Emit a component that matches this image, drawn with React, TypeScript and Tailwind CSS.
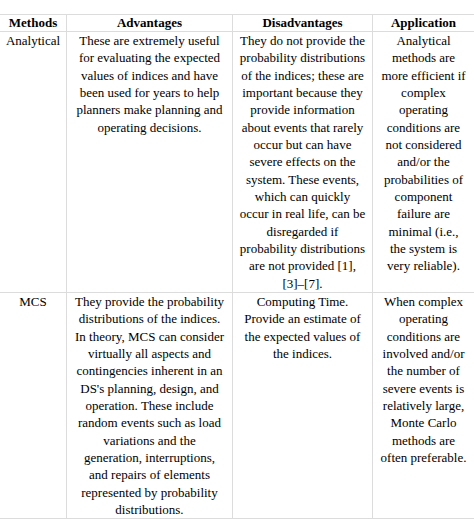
import React from "react";

type Row = { cells: string[][] };

const header = ["Methods", "Advantages", "Disadvantages", "Application"];

const rows: Row[] = [
  {
    cells: [
      ["Analytical"],
      [
        "These are extremely useful",
        "for evaluating the expected",
        "values of indices and have",
        "been used for years to help",
        "planners make planning and",
        "operating decisions.",
      ],
      [
        "They do not provide the",
        "probability distributions",
        "of the indices; these are",
        "important because they",
        "provide information",
        "about events that rarely",
        "occur but can have",
        "severe effects on the",
        "system. These events,",
        "which can quickly",
        "occur in real life, can be",
        "disregarded if",
        "probability distributions",
        "are not provided [1],",
        "[3]\u2013[7].",
      ],
      [
        "Analytical",
        "methods are",
        "more efficient if",
        "complex",
        "operating",
        "conditions are",
        "not considered",
        "and/or the",
        "probabilities of",
        "component",
        "failure are",
        "minimal (i.e.,",
        "the system is",
        "very reliable).",
      ],
    ],
  },
  {
    cells: [
      ["MCS"],
      [
        "They provide the probability",
        "distributions of the indices.",
        "In theory, MCS can consider",
        "virtually all aspects and",
        "contingencies inherent in an",
        "DS's planning, design, and",
        "operation. These include",
        "random events such as load",
        "variations and the",
        "generation, interruptions,",
        "and repairs of elements",
        "represented by probability",
        "distributions.",
      ],
      [
        "Computing Time.",
        "Provide an estimate of",
        "the expected values of",
        "the indices.",
      ],
      [
        "When complex",
        "operating",
        "conditions are",
        "involved and/or",
        "the number of",
        "severe events is",
        "relatively large,",
        "Monte Carlo",
        "methods are",
        "often preferable.",
      ],
    ],
  },
];

const colClass = [
  "w-[67px] border-r",
  "w-[166px] border-r",
  "w-[140px] border-r",
  "flex-1",
];

function Line({ text, bold }: { text: string; bold?: boolean }) {
  return (
    <p
      className={
        bold
          ? "font-['Liberation_Serif'] font-bold text-[13px] leading-[16px] text-center whitespace-nowrap"
          : "font-['Liberation_Serif'] text-[13px] leading-[17.33px] text-center whitespace-nowrap"
      }
    >
      {text}
    </p>
  );
}

export default function App() {
  return (
    <div className="w-[474px] h-[519px] overflow-hidden bg-white text-black font-['Liberation_Serif']">
      <div className="mt-[14px] w-[474px] border-t border-[#dcdcdc]">
        <div className="flex border-b border-[#dcdcdc]">
          {header.map((h, i) => (
            <div key={h} className={`${colClass[i]} border-[#dcdcdc] h-[16px]`}>
              <Line text={h} bold />
            </div>
          ))}
        </div>
        {rows.map((r, ri) => (
          <div key={ri} className="flex border-b border-[#dcdcdc]">
            {r.cells.map((lines, ci) => (
              <div key={ci} className={`${colClass[ci]} border-[#dcdcdc]`}>
                {lines.map((l, li) => (
                  <Line key={li} text={l} />
                ))}
              </div>
            ))}
          </div>
        ))}
      </div>
    </div>
  );
}
